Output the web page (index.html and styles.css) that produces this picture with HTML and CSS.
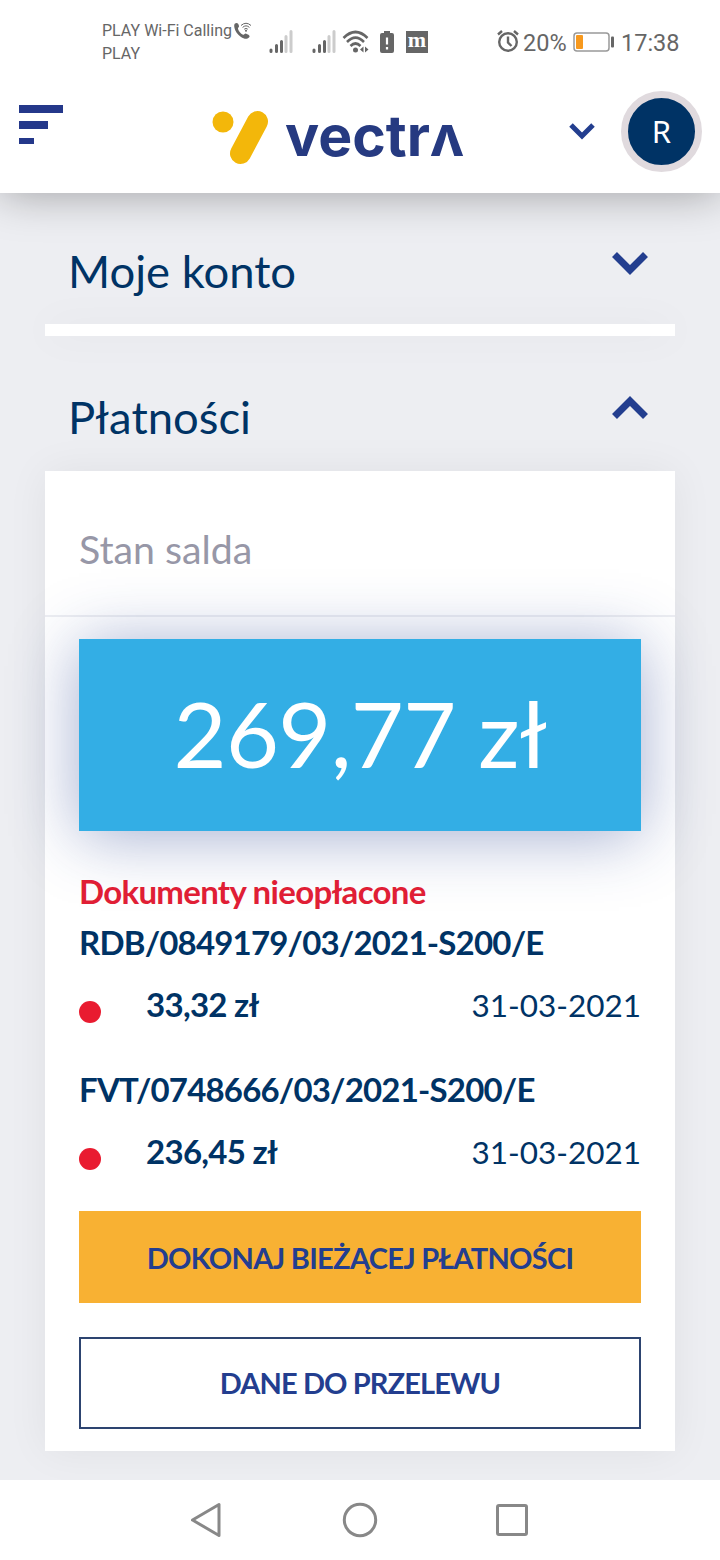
FILE: index.html
```html
<!DOCTYPE html>
<html lang="pl">
<head>
  <meta charset="UTF-8" />
  <meta name="viewport" content="width=device-width, initial-scale=1.0" />
  <title>Vectra - Płatności</title>
  <link rel="stylesheet" href="styles.css">
</head>
<body>
  <div class="status-bar">
    <div class="carrier">
      <div class="carrier-line">
        <span class="carrier-name">PLAY Wi-Fi Calling</span>
        <svg width="18" height="18" viewBox="0 0 18 18">
          <path d="M1 1.500 C3 0 4.500 1.500 5 4 C5.200 5.500 3.600 5.500 4 7 C4.800 9.500 6.500 11.500 9 12.700 C10.500 13.200 10.600 11.200 12.200 11.700 C15 12.700 16.500 14 15 15.500 C13 17.500 10 17 7 15 C3.500 12.500 1 9 .5 6 C.1 4 0 2.500 1 1.500 Z" fill="#666"/>
          <path d="M7 3.500 Q12 -1 17 3.500 M8.600 5.400 Q12 2.300 15.400 5.400 M10.200 7.200 Q12 5.600 13.800 7.200" fill="none" stroke="#666" stroke-width="1"/>
          <circle cx="12" cy="8.800" r="1" fill="#666"/>
        </svg>
      </div>
      <span class="carrier-name">PLAY</span>
    </div>
    <svg class="signal" width="24" height="24" viewBox="0 0 24 24">
      <path d="M2 22.500v-1.500M7.500 22.500v-6M12.500 22.500v-10" stroke="#666" stroke-width="3" stroke-linecap="round"/>
      <path d="M17 22.500v-15M22 22.500v-20" stroke="#ccc" stroke-width="3" stroke-linecap="round"/>
    </svg>
    <svg class="signal second" width="24" height="24" viewBox="0 0 24 24">
      <path d="M2 22.500v-1.500M7.500 22.500v-6M12.500 22.500v-10" stroke="#666" stroke-width="3" stroke-linecap="round"/>
      <path d="M17 22.500v-15M22 22.500v-20" stroke="#ccc" stroke-width="3" stroke-linecap="round"/>
    </svg>
    <svg class="wifi" width="28" height="24" viewBox="0 0 28 24">
      <path d="M1.500 8 Q13.500 -4 25.500 8 M5 12 Q13.500 3.500 22 12 M8.500 16 Q13.500 11 18.500 16" fill="none" stroke="#666" stroke-width="2.600"/>
      <circle cx="13.500" cy="20" r="2.500" fill="#666"/>
      <path d="M21.500 16.500v6l-3.500-3zM23 16.500v6l3.500-3z" fill="#666"/>
    </svg>
    <svg class="battery-alert" width="14" height="24" viewBox="0 0 14 24">
      <path d="M4 1h6v2h2q2 0 2 2v16q0 2-2 2h-10q-2 0-2-2v-16q0-2 2-2h2z" fill="#666"/>
      <path d="M7 7.500v7M7 17v2.500" stroke="#fff" stroke-width="2.200"/>
    </svg>
    <span class="m-badge">m</span>
    <svg class="alarm" width="22" height="24" viewBox="0 0 22 24">
      <circle cx="11" cy="13" r="8.800" fill="none" stroke="#666" stroke-width="2.400"/>
      <path d="M11 7.500v6l3.500 3.500M1 5.500l4-3.500M21 5.500l-4-3.500" fill="none" stroke="#666" stroke-width="2.400"/>
    </svg>
    <span class="percent">20%</span>
    <svg class="battery" width="42" height="20" viewBox="0 0 42 20">
      <rect x="1" y="1" width="35" height="18" rx="3" fill="#fff" stroke="#999" stroke-width="1.500"/>
      <rect x="3" y="3" width="7" height="14" rx="1" fill="#f7991e"/>
      <rect x="38" y="4.500" width="3" height="11" rx="1" fill="#666"/>
    </svg>
    <span class="clock">17:38</span>
  </div>

  <header class="header">
    <div class="menu">
      <span class="menu-line"></span>
      <span class="menu-line medium"></span>
      <span class="menu-line short"></span>
    </div>
    <svg class="logo" width="254" height="84" viewBox="0 -14 254 84">
      <circle cx="11" cy="12" r="10.500" fill="#f3b70a"/>
      <path d="M45.500 11.500L28.500 43.500" stroke="#f3b70a" stroke-width="21" stroke-linecap="round"/>
      <text class="logo-text" x="73" y="45.500" textLength="145" lengthAdjust="spacingAndGlyphs">vectr</text>
      <text class="logo-text" x="218" y="45.500" textLength="34" lengthAdjust="spacingAndGlyphs">ʌ</text>
    </svg>
    <svg class="header-arrow" width="26" height="17" viewBox="0 0 26 17">
      <path d="M2 2l11 11 11-11" fill="none" stroke="#233e8f" stroke-width="5"/>
    </svg>
    <div class="avatar">R</div>
  </header>

  <main class="content">
    <section class="section">
      <div class="section-title">
        <h2>Moje konto</h2>
        <svg width="36" height="24" viewBox="0 0 36 24">
          <path d="M2.500 2.500L18 18l15.500-15.500" fill="none" stroke="#233e8f" stroke-width="7"/>
        </svg>
      </div>
      <div class="card empty"></div>
    </section>

    <section class="section">
      <div class="section-title payments">
        <h2>Płatności</h2>
        <svg width="36" height="24" viewBox="0 0 36 24">
          <path d="M2.500 21.500L18 6l15.500 15.500" fill="none" stroke="#233e8f" stroke-width="7"/>
        </svg>
      </div>
      <div class="card">
        <div class="card-title">Stan salda</div>
        <div class="card-body">
          <div class="amount">269,77 zł</div>
          <div class="unpaid">Dokumenty nieopłacone</div>
          <div class="document">
            <div class="document-number">RDB/0849179/03/2021-S200/E</div>
            <div class="document-row">
              <span class="dot"></span>
              <span class="price">33,32 zł</span>
              <span class="date">31-03-2021</span>
            </div>
          </div>
          <div class="document">
            <div class="document-number">FVT/0748666/03/2021-S200/E</div>
            <div class="document-row">
              <span class="dot"></span>
              <span class="price">236,45 zł</span>
              <span class="date">31-03-2021</span>
            </div>
          </div>
          <button class="btn btn-pay">DOKONAJ BIEŻĄCEJ PŁATNOŚCI</button>
          <button class="btn btn-transfer">DANE DO PRZELEWU</button>
        </div>
      </div>
    </section>
  </main>

  <nav class="nav-bar">
    <svg width="36" height="36" viewBox="0 0 36 36">
      <path d="M29 2.500v31L2.500 18z" fill="none" stroke="#888" stroke-width="3" stroke-linejoin="round"/>
    </svg>
    <svg width="36" height="36" viewBox="0 0 36 36">
      <circle cx="18" cy="18" r="15.700" fill="none" stroke="#888" stroke-width="3"/>
    </svg>
    <svg width="36" height="36" viewBox="0 0 36 36">
      <rect x="3.500" y="3.500" width="29" height="29" rx="1.500" fill="none" stroke="#888" stroke-width="3"/>
    </svg>
  </nav>
</body>
</html>
```

FILE: styles.css
```css
* {
  box-sizing: border-box;
}
body {
  margin: 0;
  width: 720px;
  height: 1560px;
  display: flex;
  flex-direction: column;
  overflow: hidden;
  font-family: Lato, sans-serif;
  color: #003365;
  background: #edeef2;
}
svg {
  display: block;
  flex: none;
}

/* phone status bar */
.status-bar {
  height: 80px;
  padding: 0 40px 0 102px;
  display: flex;
  align-items: flex-start;
  background: #fff;
  font-family: Roboto, sans-serif;
  color: #666;
}
.carrier {
  width: 167px;
  padding-top: 19px;
  font-size: 16px;
  line-height: 23px;
}
.carrier-line {
  display: flex;
  align-items: center;
  gap: 2px;
  height: 23px;
  white-space: nowrap;
}
.signal {
  margin-top: 29px;
}
.second {
  margin-left: 19px;
}
.wifi {
  margin: 30px 0 0 6px;
}
.battery-alert {
  margin: 30px 0 0 10px;
}
.m-badge {
  width: 22px;
  height: 22px;
  margin: 31px 0 0 12px;
  background: #666;
  color: #fff;
  font: bold 22px/17px "Liberation Serif", serif;
  text-align: center;
}
.alarm {
  margin: 29px 0 0 69px;
}
.percent,
.clock {
  margin-top: 29px;
  font-size: 23.5px;
  line-height: 28px;
  white-space: nowrap;
}
.percent {
  margin-left: 4px;
  width: 50px;
}
.battery {
  margin: 32px 6px 0 0;
}

/* page header */
.header {
  position: relative;
  height: 113px;
  padding: 0 18px;
  display: flex;
  align-items: flex-start;
  background: #fff;
  box-shadow: 0 0 45px rgba(0, 0, 0, 0.35);
  clip-path: inset(0 0 -60px 0);
}
.menu {
  width: 194px;
  padding: 25px 0 0 1px;
}
.menu-line {
  display: block;
  width: 44px;
  height: 8px;
  margin-bottom: 8px;
  background: #24388a;
}
.medium {
  width: 29px;
  margin-bottom: 9px;
}
.short {
  width: 15px;
  height: 6px;
}
.logo {
  margin: 16px 0 0 1px;
}
.logo-text {
  font-family: Inter, "DejaVu Sans", sans-serif;
  font-size: 56px;
  font-weight: 700;
  fill: #263a81;
}
.header-arrow {
  margin: 43px 0 0 103px;
}
.avatar {
  width: 81px;
  height: 81px;
  margin: 11px 0 0 26px;
  flex: none;
  border: 7px solid #e0dade;
  border-radius: 50%;
  background: #003365;
  color: #fff;
  font: 31px/66px "Noto Sans", sans-serif;
  text-align: center;
}

/* sections */
.content {
  height: 1287px;
  padding: 0 45px;
}
.section-title {
  height: 131px;
  padding: 50px 27px 0 23px;
  display: flex;
  justify-content: space-between;
}
.section-title svg {
  margin-top: 9px;
}
.section-title h2 {
  margin: 0;
  font-size: 45.4px;
  font-weight: 400;
  line-height: 56px;
}
.payments {
  height: 135px;
  padding-top: 53px;
}
.payments svg {
  margin-top: 6px;
}
.card {
  background: #fff;
  box-shadow: 0 0 40px rgba(0, 0, 0, 0.06);
}
.empty {
  height: 12px;
}
.card-title {
  height: 146px;
  padding: 53px 34px 0;
  border-bottom: 2px solid #edeef2;
  font-size: 39.3px;
  line-height: 50px;
  color: #9797a7;
}
.card-body {
  padding: 22px 34px;
}
.amount {
  height: 192px;
  margin-bottom: 38px;
  background: #33aee5;
  box-shadow: 0 5px 62px rgba(35, 62, 143, 0.42);
  color: #fff;
  font-size: 91.5px;
  letter-spacing: -0.7px;
  line-height: 187px;
  text-align: center;
}
.unpaid,
.document-number {
  position: relative;
  font-size: 33px;
  font-weight: 700;
  letter-spacing: -0.8px;
  line-height: 44px;
  white-space: nowrap;
}
.unpaid {
  height: 51px;
  letter-spacing: -0.7px;
  color: #e01e35;
}
.document {
  height: 147px;
}
.document-row {
  height: 64px;
  margin-top: 19px;
  display: flex;
  font-size: 31.5px;
  line-height: 44px;
}
.dot {
  width: 22px;
  height: 22px;
  margin: 18px 45px 0 0;
  border-radius: 50%;
  background: #e91b30;
}
.price {
  font-size: 33px;
  font-weight: 700;
  letter-spacing: -0.7px;
  line-height: 43px;
}
.date {
  margin-left: auto;
}
.btn {
  display: block;
  width: 100%;
  height: 92px;
  padding: 0;
  border: none;
  font: 700 29px/94px Lato, sans-serif;
  letter-spacing: -0.7px;
  color: #233e8f;
}
.btn-pay {
  margin: -3px 0 34px;
  background: #f8b133;
}
.btn-transfer {
  border: 2px solid #2d4470;
  background: #fff;
  letter-spacing: -0.9px;
  line-height: 86px;
}

/* system navigation */
.nav-bar {
  height: 80px;
  padding: 0 190px;
  display: flex;
  align-items: center;
  justify-content: space-between;
  background: #fff;
}
```
